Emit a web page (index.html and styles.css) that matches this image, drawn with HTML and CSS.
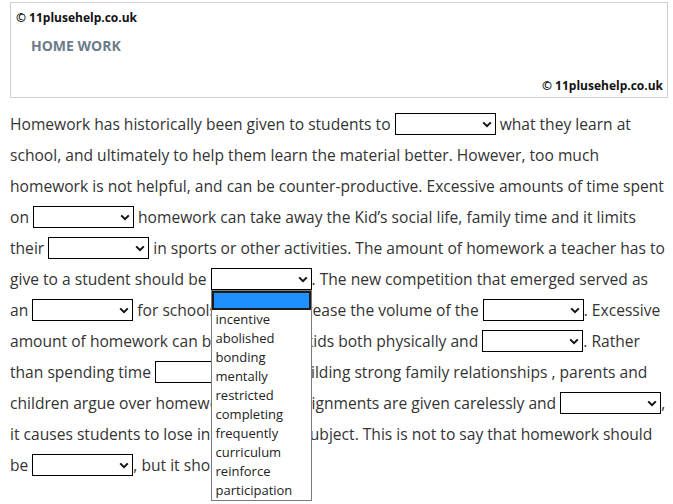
FILE: index.html
```html
<!DOCTYPE html>
<html lang="en">
<head>
<meta charset="utf-8">
<title>Home Work</title>
<link rel="stylesheet" href="styles.css">
</head>
<body>
<div class="header">
  <div class="brand">© 11plusehelp.co.uk</div>
  <h2 class="title">HOME WORK</h2>
  <div class="brand brand-right">© 11plusehelp.co.uk</div>
</div>
<p class="passage">Homework has historically been given to students to <span class="pick"><select class="blank"><option></option><option>incentive</option><option>abolished</option><option>bonding</option><option>mentally</option><option>restricted</option><option>completing</option><option>frequently</option><option>curriculum</option><option>reinforce</option><option>participation</option></select><svg class="chev" viewBox="0 0 10 7" width="10" height="7"><path d="M1.2 1.4 L5 5.2 L8.8 1.4" fill="none" stroke="#111" stroke-width="2"/></svg></span> what they learn at school, and ultimately to help them learn the material better. However, too much homework is not helpful, and can be counter-productive. Excessive amounts of time spent on <span class="pick"><select class="blank"><option></option><option>incentive</option><option>abolished</option><option>bonding</option><option>mentally</option><option>restricted</option><option>completing</option><option>frequently</option><option>curriculum</option><option>reinforce</option><option>participation</option></select><svg class="chev" viewBox="0 0 10 7" width="10" height="7"><path d="M1.2 1.4 L5 5.2 L8.8 1.4" fill="none" stroke="#111" stroke-width="2"/></svg></span> homework can take away the Kid’s social life, family time and it limits their <span class="pick"><select class="blank"><option></option><option>incentive</option><option>abolished</option><option>bonding</option><option>mentally</option><option>restricted</option><option>completing</option><option>frequently</option><option>curriculum</option><option>reinforce</option><option>participation</option></select><svg class="chev" viewBox="0 0 10 7" width="10" height="7"><path d="M1.2 1.4 L5 5.2 L8.8 1.4" fill="none" stroke="#111" stroke-width="2"/></svg></span> in sports or other activities. The amount of homework a teacher has to give to a student should be <span class="pick open"><select class="blank"><option></option><option>incentive</option><option>abolished</option><option>bonding</option><option>mentally</option><option>restricted</option><option>completing</option><option>frequently</option><option>curriculum</option><option>reinforce</option><option>participation</option></select><svg class="chev" viewBox="0 0 10 7" width="10" height="7"><path d="M1.2 1.4 L5 5.2 L8.8 1.4" fill="none" stroke="#111" stroke-width="2"/></svg><span class="menu"><span class="opt active"></span><span class="opt">incentive</span><span class="opt">abolished</span><span class="opt">bonding</span><span class="opt">mentally</span><span class="opt">restricted</span><span class="opt">completing</span><span class="opt">frequently</span><span class="opt">curriculum</span><span class="opt">reinforce</span><span class="opt">participation</span></span></span>. The new competition that emerged served as an <span class="pick"><select class="blank"><option></option><option>incentive</option><option>abolished</option><option>bonding</option><option>mentally</option><option>restricted</option><option>completing</option><option>frequently</option><option>curriculum</option><option>reinforce</option><option>participation</option></select><svg class="chev" viewBox="0 0 10 7" width="10" height="7"><path d="M1.2 1.4 L5 5.2 L8.8 1.4" fill="none" stroke="#111" stroke-width="2"/></svg></span> for schools to vastly increase the volume of the <span class="pick"><select class="blank"><option></option><option>incentive</option><option>abolished</option><option>bonding</option><option>mentally</option><option>restricted</option><option>completing</option><option>frequently</option><option>curriculum</option><option>reinforce</option><option>participation</option></select><svg class="chev" viewBox="0 0 10 7" width="10" height="7"><path d="M1.2 1.4 L5 5.2 L8.8 1.4" fill="none" stroke="#111" stroke-width="2"/></svg></span>. Excessive amount of homework can be harmful to kids both physically and <span class="pick"><select class="blank"><option></option><option>incentive</option><option>abolished</option><option>bonding</option><option>mentally</option><option>restricted</option><option>completing</option><option>frequently</option><option>curriculum</option><option>reinforce</option><option>participation</option></select><svg class="chev" viewBox="0 0 10 7" width="10" height="7"><path d="M1.2 1.4 L5 5.2 L8.8 1.4" fill="none" stroke="#111" stroke-width="2"/></svg></span>. Rather than spending time <span class="pick"><select class="blank"><option></option><option>incentive</option><option>abolished</option><option>bonding</option><option>mentally</option><option>restricted</option><option>completing</option><option>frequently</option><option>curriculum</option><option>reinforce</option><option>participation</option></select><svg class="chev" viewBox="0 0 10 7" width="10" height="7"><path d="M1.2 1.4 L5 5.2 L8.8 1.4" fill="none" stroke="#111" stroke-width="2"/></svg></span> and building strong family relationships , parents and children argue over homework. When assignments are given carelessly and <span class="pick"><select class="blank"><option></option><option>incentive</option><option>abolished</option><option>bonding</option><option>mentally</option><option>restricted</option><option>completing</option><option>frequently</option><option>curriculum</option><option>reinforce</option><option>participation</option></select><svg class="chev" viewBox="0 0 10 7" width="10" height="7"><path d="M1.2 1.4 L5 5.2 L8.8 1.4" fill="none" stroke="#111" stroke-width="2"/></svg></span>, it causes students to lose interest in the subject. This is not to say that homework should be <span class="pick"><select class="blank"><option></option><option>incentive</option><option>abolished</option><option>bonding</option><option>mentally</option><option>restricted</option><option>completing</option><option>frequently</option><option>curriculum</option><option>reinforce</option><option>participation</option></select><svg class="chev" viewBox="0 0 10 7" width="10" height="7"><path d="M1.2 1.4 L5 5.2 L8.8 1.4" fill="none" stroke="#111" stroke-width="2"/></svg></span>, but it should be</p>
</body>
</html>
```
FILE: styles.css
```css
html, body {
  margin: 0;
  padding: 0;
  background: #fff;
}
body {
  box-sizing: border-box;
  min-height: 520px;
  padding: 2px 5px 0 10px;
  font-family: "Open Sans", "Liberation Sans", sans-serif;
  color: #333;
}
.header {
  border: 1px solid #cfcfcf;
  height: 94px;
  padding: 0 4px 0 5px;
  display: flex;
  flex-direction: column;
}
.brand {
  font-size: 12px;
  font-weight: 700;
  color: #111;
  line-height: 20px;
  margin-top: 5px;
}
.title {
  margin: 8px 0 0 15px;
  font-size: 14px;
  font-weight: 700;
  line-height: 20px;
  color: #6d7b8a;
}
.brand-right {
  margin-top: auto;
  margin-bottom: 1px;
  text-align: right;
}
.passage {
  margin: 11px 0 0 0;
  font-size: 15.6px;
  line-height: 31px;
}
.pick {
  position: relative;
  display: inline-block;
  vertical-align: middle;
  width: 101px;
  height: 22px;
  line-height: 0;
  margin-top: -3px;
}
.blank {
  appearance: none;
  -webkit-appearance: none;
  box-sizing: border-box;
  width: 101px;
  height: 22px;
  margin: 0;
  padding: 0 4px;
  border: 1px solid #000;
  border-radius: 0;
  background: #fff;
  font: 13px "Open Sans", sans-serif;
}
.chev {
  position: absolute;
  right: 4px;
  top: 8px;
  pointer-events: none;
}
.menu {
  position: absolute;
  left: 0;
  top: 22px;
  width: 101px;
  box-sizing: border-box;
  border: 1px solid #7a7a7a;
  background: #fff;
  display: flex;
  flex-direction: column;
  z-index: 2;
}
.opt {
  display: block;
  height: 19px;
  line-height: 19px;
  padding-left: 4px;
  font-size: 13px;
  color: #222;
  white-space: nowrap;
}
.opt.active {
  background: #1e90ff;
  box-shadow: inset 0 0 0 2px #1b1b1b;
}
```
